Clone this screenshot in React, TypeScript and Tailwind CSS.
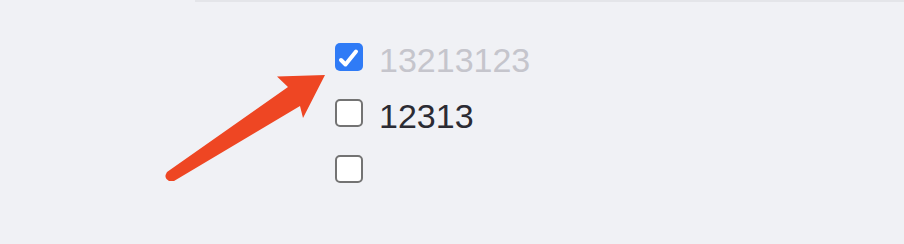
const items = [
  { id: 1, label: '13213123', done: true },
  { id: 2, label: '12313', done: false },
  { id: 3, label: '', done: false },
]

function Box({ checked }: { checked: boolean }) {
  if (checked) {
    return (
      <div className="w-[28px] h-[28px] rounded-[5px] bg-[#2f7bf6] shrink-0">
        <svg width="28" height="28" viewBox="0 0 28 28">
          <path
            d="M6 17 L10.5 21.5 L21 8.5"
            fill="none"
            stroke="white"
            strokeWidth="4"
            strokeLinecap="round"
            strokeLinejoin="round"
          />
        </svg>
      </div>
    )
  }
  return <div className="w-[28px] h-[28px] rounded-[5px] bg-white border-2 border-[#737373] shrink-0" />
}

export default function App() {
  return (
    <div
      className="relative w-[904px] h-[244px] bg-[#f0f1f5] overflow-hidden"
      style={{ fontFamily: '"Liberation Sans", Arial, sans-serif' }}
    >
      {/* panel edge above */}
      <div className="ml-[195px] h-[2px] bg-[#e4e5e9]" />

      <ul className="pl-[335px] pt-[41px] flex flex-col gap-[28px]">
        {items.map((item) => (
          <li key={item.id} className="flex items-center h-[28px]">
            <Box checked={item.done} />
            <span
              className={
                'ml-[16px] mt-[5px] text-[34px] leading-none ' +
                (item.done ? 'text-[#c5c5cc]' : 'text-[#2b2b33]')
              }
            >
              {item.label}
            </span>
          </li>
        ))}
      </ul>

      {/* annotation arrow */}
      <svg className="absolute left-0 top-0 pointer-events-none" width="904" height="244" viewBox="0 0 904 244">
        <path
          d="M325 75 L277 76.5 L288 87 L167 172 Q163 178 169 181 L174 181 L300 106 L303 118 Z"
          fill="#ee4623"
        />
      </svg>
    </div>
  )
}
